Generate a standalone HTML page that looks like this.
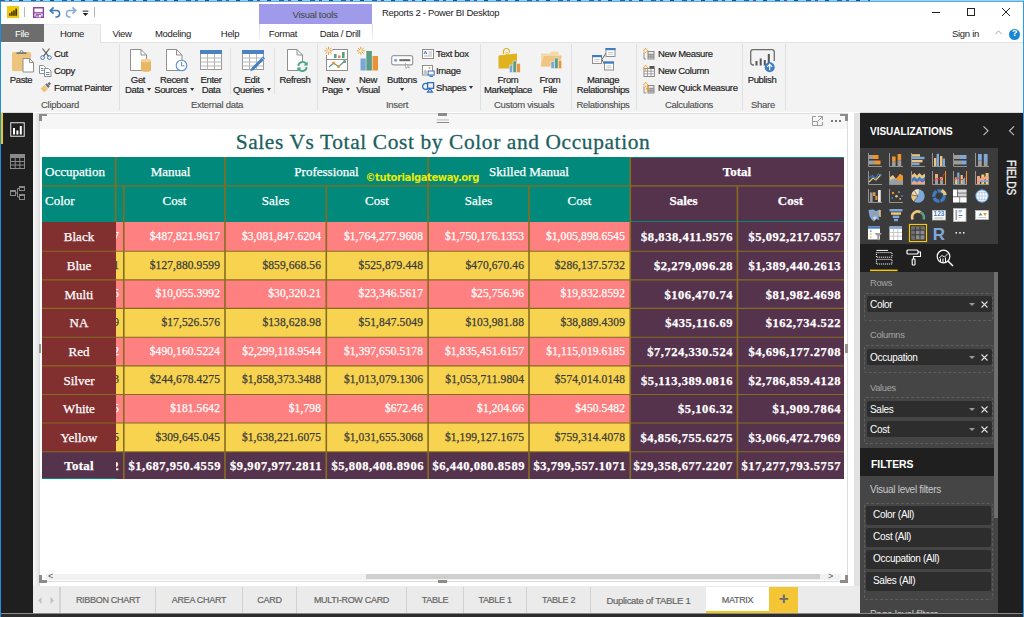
<!DOCTYPE html>
<html lang="en">
<head>
<meta charset="utf-8">
<title>Reports 2 - Power BI Desktop</title>
<style>
html,body{margin:0;padding:0}
body{width:1024px;height:617px;overflow:hidden;position:relative;background:#fff;font-family:"Liberation Sans",sans-serif;font-size:9.5px;letter-spacing:-0.3px;color:#1c1c1c;line-height:1}
.a{position:absolute}
.t{position:absolute;white-space:nowrap}
.c{position:absolute;white-space:nowrap;text-align:center;transform:translateX(-50%)}
svg{position:absolute;overflow:visible}
/* ribbon */
#ribbon{left:1px;top:43px;width:1022px;height:69px;background:#f3f3f3;border-bottom:1px solid #dadada}
.sep{position:absolute;top:44px;width:1px;height:66px;background:#e0e0e0}
.gl{top:100px;color:#4f4f4f;-webkit-text-stroke:0.12px}
.rb{color:#1f1f1f;line-height:10px;letter-spacing:-0.35px;-webkit-text-stroke:0.18px}
.car{display:inline-block;width:0;height:0;border-left:2.2px solid transparent;border-right:2.2px solid transparent;border-top:3px solid #333;vertical-align:1.8px;margin-left:1px}
/* matrix */
.cell{-webkit-text-stroke:0.25px;position:absolute;box-sizing:border-box;white-space:nowrap;overflow:hidden}
/* panes */
.well{position:absolute;left:867px;width:125px;height:18px;background:#2d2d2d;border-radius:2px;color:#fff;font-size:10px}
.well span{position:absolute;left:3px;top:4px}
.lbl{position:absolute;left:870px;color:#a6a6a6;font-size:10.5px}
.flt{position:absolute;left:866px;width:125px;height:20px;background:#2d2d2d;border-radius:2px;color:#fff;font-size:10px}
.flt span{position:absolute;left:7px;top:4px}
.ptab{position:absolute;top:587px;height:26px;box-sizing:border-box;border-right:1px solid #d0d0d0;color:#666;font-size:10.5px;text-align:center;line-height:27px;white-space:nowrap;-webkit-text-stroke:0.2px}
</style>
</head>
<body>
<!-- window frame -->
<div class="a" style="left:0;top:0;width:1024px;height:1px;background:#a9cde6"></div><div class="a" style="left:0;top:0;width:870px;height:1px;background:repeating-linear-gradient(90deg,#4a5878 0 5px,#9ccbe8 5px 9px,#7a4560 9px 12px,#a8d2ec 12px 19px,#39465f 19px 23px,#9ccbe8 23px 31px)"></div>
<div class="a" style="left:0;top:1px;width:1024px;height:1px;background:#4db0ef"></div>
<div class="a" style="left:0;top:1px;width:1px;height:616px;background:#1f8fe0"></div>
<div class="a" style="left:1023px;top:1px;width:1px;height:616px;background:#2b9ce8"></div>

<!-- TITLEBAR -->
<div id="titlebar">
<div class="a" style="left:7px;top:6px;width:12px;height:12px;background:#f2c811"></div>
<svg style="left:7px;top:6px" width="12" height="12" viewBox="0 0 12 12"><g fill="#2a2205"><rect x="2.2" y="7.2" width="1.3" height="2.6"/><rect x="4.2" y="5.6" width="1.4" height="4.2"/><rect x="6.3" y="4.4" width="1.4" height="5.4"/><rect x="8.4" y="2.6" width="1.5" height="7.2"/></g></svg>
<div class="a" style="left:24px;top:7px;width:1px;height:10px;background:#b5b5b5"></div>
<svg style="left:33px;top:7px" width="11" height="11" viewBox="0 0 11 11"><path d="M0.7 0.7h9.6v9.6h-9.6z" fill="#fff" stroke="#8c3fa8" stroke-width="1.4"/><rect x="0.7" y="5.2" width="9.6" height="1.3" fill="#8c3fa8"/><rect x="2.6" y="7.2" width="5.8" height="3.2" fill="#8c3fa8"/><rect x="3.4" y="8.6" width="1.2" height="1.8" fill="#fff"/><rect x="5.6" y="8" width="2.2" height="2.4" fill="#fff"/></svg>
<svg style="left:49px;top:6px" width="12" height="12" viewBox="0 0 12 12"><path d="M4.6 1.4 L1.2 4.6 L4.6 7.6 M1.4 4.6 H7.4 A3.2 3.2 0 0 1 7.4 11 H6.4" fill="none" stroke="#3a78b8" stroke-width="1.5"/></svg>
<svg style="left:65px;top:6px" width="12" height="12" viewBox="0 0 12 12"><path d="M7.4 1.4 L10.8 4.6 L7.4 7.6 M10.6 4.6 H4.6 A3.2 3.2 0 0 0 4.6 11 H5.6" fill="none" stroke="#86acd6" stroke-width="1.5"/></svg>
<svg style="left:82px;top:10px" width="7" height="7" viewBox="0 0 7 7"><rect x="0.6" y="0.6" width="5.8" height="1.1" fill="#333"/><path d="M0.6 3 H6.4 L3.5 6z" fill="#222"/></svg>
<div class="a" style="left:94px;top:7px;width:1px;height:10px;background:#b5b5b5"></div>
<div class="a" style="left:259px;top:4px;width:113px;height:20px;background:#9f9bea"></div>
<div class="c" style="left:315px;top:10px;color:#444">Visual tools</div>
<div class="t" style="left:382px;top:7.5px;color:#222">Reports 2 - Power BI Desktop</div>
<div class="a" style="left:932px;top:12px;width:8px;height:1px;background:#222"></div>
<div class="a" style="left:967px;top:8px;width:6px;height:6px;border:1px solid #222"></div>
<svg style="left:1002px;top:8px" width="8" height="8" viewBox="0 0 8 8"><path d="M0 0L8 8M8 0L0 8" stroke="#222" stroke-width="1"/></svg>
</div>
<!-- TABS -->
<div id="tabs">
<div class="a" style="left:1px;top:24px;width:43px;height:18px;background:#6d6d6d"></div>
<div class="c" style="left:22px;top:29px;color:#fff">File</div>
<div class="a" style="left:44px;top:24px;width:56px;height:19px;border-top:1px solid #ececec;box-sizing:content-box;background:#f3f3f3;border-right:1px solid #e2e2e2"></div>
<div class="a" style="left:101px;top:42px;width:922px;height:1px;background:#e2e2e2"></div>
<div class="c" style="left:72px;top:29px">Home</div>
<div class="c" style="left:122px;top:29px">View</div>
<div class="c" style="left:173px;top:29px">Modeling</div>
<div class="c" style="left:230px;top:29px">Help</div>
<div class="a" style="left:259px;top:24px;width:1px;height:16px;background:linear-gradient(#d6d4f5,#f4f4fb)"></div>
<div class="a" style="left:372px;top:24px;width:1px;height:16px;background:linear-gradient(#d6d4f5,#f4f4fb)"></div>
<div class="c" style="left:283px;top:29px">Format</div>
<div class="c" style="left:340px;top:29px">Data / Drill</div>
<div class="t" style="left:952px;top:28.5px">Sign in</div>
<svg style="left:995px;top:30px" width="7" height="5" viewBox="0 0 7 5"><path d="M0.3 4.2L3.5 0.8L6.7 4.2" fill="none" stroke="#aaa" stroke-width="1"/></svg>
<div class="a" style="left:1009px;top:29px;width:11px;height:11px;border-radius:6px;background:#1a86d2"></div>
<div class="c" style="left:1014.5px;top:28.5px;font-size:9px;font-weight:bold;color:#fff">?</div>
</div>
<!-- RIBBON -->
<div id="ribbon" class="a"></div>
<div id="rib">
<div class="sep" style="left:119px"></div>
<div class="sep" style="left:317px"></div>
<div class="sep" style="left:480px"></div>
<div class="sep" style="left:571px"></div>
<div class="sep" style="left:636px"></div>
<div class="sep" style="left:742px"></div>
<div class="sep" style="left:785px"></div>
<div class="sep" style="left:230px;height:46px;top:48px"></div>
<div class="sep" style="left:274px;height:46px;top:48px"></div>
<div class="c gl" style="left:60px">Clipboard</div>
<div class="c gl" style="left:217px">External data</div>
<div class="c gl" style="left:397px">Insert</div>
<div class="c gl" style="left:524px">Custom visuals</div>
<div class="c gl" style="left:603px">Relationships</div>
<div class="c gl" style="left:689px">Calculations</div>
<div class="c gl" style="left:763px">Share</div>
<div class="c rb" style="left:21px;top:75px">Paste</div>
<div class="t rb" style="left:54px;top:49px">Cut</div>
<div class="t rb" style="left:54px;top:66px">Copy</div>
<div class="t rb" style="left:54px;top:83px">Format Painter</div>
<div class="c rb" style="left:138px;top:75px">Get<br>Data <span class="car"></span></div>
<div class="c rb" style="left:174px;top:75px">Recent<br>Sources <span class="car"></span></div>
<div class="c rb" style="left:211px;top:75px">Enter<br>Data</div>
<div class="c rb" style="left:252px;top:75px">Edit<br>Queries <span class="car"></span></div>
<div class="c rb" style="left:295px;top:75px">Refresh</div>
<div class="c rb" style="left:336px;top:75px">New<br>Page <span class="car"></span></div>
<div class="c rb" style="left:368px;top:75px">New<br>Visual</div>
<div class="c rb" style="left:402px;top:75px">Buttons<br><span class="car" style="vertical-align:2.5px"></span></div>
<div class="t rb" style="left:436px;top:49px">Text box</div>
<div class="t rb" style="left:436px;top:66px">Image</div>
<div class="t rb" style="left:436px;top:83px">Shapes <span class="car"></span></div>
<div class="c rb" style="left:508px;top:75px">From<br>Marketplace</div>
<div class="c rb" style="left:550px;top:75px">From<br>File</div>
<div class="c rb" style="left:603px;top:75px">Manage<br>Relationships</div>
<div class="t rb" style="left:658px;top:49px">New Measure</div>
<div class="t rb" style="left:658px;top:66px">New Column</div>
<div class="t rb" style="left:658px;top:83px">New Quick Measure</div>
<div class="c rb" style="left:762px;top:75px">Publish</div>
<svg style="left:12px;top:49px" width="22" height="24" viewBox="0 0 22 24"><rect x="0" y="3" width="19" height="19" rx="1.5" fill="#ecc47c"/><path d="M4.5 5V3.2H7.5A2 2 0 0 1 11.5 3.2H14.5V5z" fill="#7b7b7b"/><circle cx="9.5" cy="2.6" r="0.8" fill="#f3f3f3"/><path d="M11 9.5H17.5L21.5 13.5V23H11z" fill="#fff" stroke="#8f8f8f" stroke-width="1"/><path d="M17.5 9.5V13.5H21.5" fill="none" stroke="#8f8f8f"/></svg>
<svg style="left:40px;top:48px" width="12" height="12" viewBox="0 0 12 12"><path d="M2.5 0.5L8.6 8.4M9.5 0.5L3.4 8.4" stroke="#555" stroke-width="1.1" fill="none"/><circle cx="2.6" cy="9.6" r="1.9" fill="none" stroke="#4a7ebb" stroke-width="1"/><circle cx="9.4" cy="9.6" r="1.9" fill="none" stroke="#4a7ebb" stroke-width="1"/></svg>
<svg style="left:39px;top:65px" width="13" height="12" viewBox="0 0 13 12"><path d="M0.5 0.5H4.5L6.5 2.5V8.5H0.5z" fill="#fff" stroke="#8f8f8f" stroke-width="1"/><path d="M2 3.5H4.5M2 5.5H4.5" stroke="#4a7ebb" stroke-width="0.9"/><path d="M5.5 3.5H9.5L12 6V11.5H5.5z" fill="#fff" stroke="#8f8f8f" stroke-width="1"/><path d="M7 7.5H10.5M7 9.5H10.5" stroke="#4a7ebb" stroke-width="0.9"/></svg>
<svg style="left:40px;top:82px" width="12" height="11" viewBox="0 0 12 11"><path d="M0.5 6.5L4.5 3L8 7L4 10.5z" fill="#ecc47c"/><path d="M5.2 2.6L6.8 1.2L9.8 4.6L8.2 6z" fill="#6b6b6b"/><path d="M7.6 1.6L9.4 0L11 1.8L9.2 3.4z" fill="#6b6b6b"/></svg>
<svg style="left:130px;top:49px" width="22" height="23" viewBox="0 0 22 23"><path d="M0.5 0.5H11L16.5 6V21.5H0.5z" fill="#fff" stroke="#8f8f8f" stroke-width="1"/><path d="M11 0.5V6H16.5" fill="none" stroke="#8f8f8f"/><path d="M11 11.5V21A5 1.8 0 0 0 21 21V11.5z" fill="#e8b766"/><ellipse cx="16" cy="11.5" rx="5" ry="1.8" fill="#f3d298"/></svg>
<svg style="left:166px;top:49px" width="22" height="23" viewBox="0 0 22 23"><path d="M0.5 0.5H10.5L16 6V21.5H0.5z" fill="#fff" stroke="#8f8f8f" stroke-width="1"/><path d="M10.5 0.5V6H16" fill="none" stroke="#8f8f8f"/><circle cx="15.5" cy="16.5" r="5.3" fill="#fff" stroke="#5a8ed0" stroke-width="1.1"/><path d="M15.5 13V16.8H18.5" fill="none" stroke="#5a8ed0" stroke-width="1"/></svg>
<svg style="left:200px;top:50px" width="22" height="20" viewBox="0 0 22 20"><rect x="0.5" y="0.5" width="21" height="19" fill="#fff" stroke="#9a9a9a"/><rect x="0" y="0" width="22" height="4" fill="#4a82c3"/><path d="M0.5 8H21.5M0.5 12H21.5M0.5 16H21.5M7.5 4V19.5M14.5 4V19.5" stroke="#b5b5b5" fill="none"/></svg>
<svg style="left:242px;top:50px" width="22" height="20" viewBox="0 0 22 20"><rect x="0.5" y="0.5" width="21" height="19" fill="#fff" stroke="#9a9a9a"/><rect x="0" y="0" width="22" height="4" fill="#4a82c3"/><path d="M0.5 8H21.5M0.5 12H21.5M0.5 16H21.5M7.5 4V19.5M14.5 4V19.5" stroke="#b5b5b5" fill="none"/></svg>
<svg style="left:248px;top:55px" width="18" height="18" viewBox="0 0 18 18"><path d="M15 1.5L17 3.5L5.5 15L2.2 16.3L3.5 13z" fill="#3f7cc4"/><path d="M13.8 2.7L15.8 4.7" stroke="#f3f3f3" stroke-width="0.8"/></svg>
<svg style="left:287px;top:49px" width="22" height="24" viewBox="0 0 22 24"><path d="M0.5 0.5H10L15.5 6V21.5H0.5z" fill="#fff" stroke="#8f8f8f" stroke-width="1"/><path d="M10 0.5V6H15.5" fill="none" stroke="#8f8f8f"/><circle cx="15.5" cy="17.5" r="5.6" fill="#f3f3f3"/><path d="M11.3 16.8A4.3 4.3 0 0 1 19 14.6" fill="none" stroke="#4aa380" stroke-width="1.8"/><path d="M20.6 12.4V16.4H16.6z" fill="#4aa380"/><path d="M19.7 18.2A4.3 4.3 0 0 1 12 20.4" fill="none" stroke="#4aa380" stroke-width="1.8"/><path d="M10.4 22.6V18.6H14.4z" fill="#4aa380"/></svg>
<svg style="left:324px;top:46px" width="25" height="26" viewBox="0 0 25 26"><rect x="2.5" y="3.5" width="21" height="21" fill="#fff" stroke="#8f8f8f"/><path d="M2.5 13.5H23.5" stroke="#8f8f8f"/><rect x="10" y="8" width="2.6" height="4" fill="#5a9e86"/><rect x="14" y="9.5" width="2.6" height="2.5" fill="#e8923a"/><rect x="18" y="6" width="2.6" height="6" fill="#5a9e86"/><path d="M5 21L9.5 17L14.5 20.5L20.5 15.5" fill="none" stroke="#5a9e86" stroke-width="1.3"/><circle cx="9.5" cy="17" r="1.5" fill="#e8923a"/><circle cx="14.5" cy="20.5" r="1.5" fill="#e8923a"/><circle cx="20.5" cy="15.5" r="1.6" fill="#5a9e86"/><rect x="0" y="0" width="8.5" height="9" fill="#f3f3f3"/><path d="M5.8 4.8L8.5 4.8M5.4 5.7L7.3 7.6M4.5 6.1L4.5 8.8M3.6 5.7L1.7 7.6M3.2 4.8L0.5 4.8M3.6 3.9L1.7 2.0M4.5 3.5L4.5 0.8M5.4 3.9L7.3 2.0" stroke="#f0a030" stroke-width="1" fill="none"/></svg>
<svg style="left:356px;top:46px" width="23" height="26" viewBox="0 0 23 26"><path d="M6.1 4.8L8.8 4.8M5.7 5.7L7.6 7.6M4.8 6.1L4.8 8.8M3.9 5.7L2.0 7.6M3.5 4.8L0.8 4.8M3.9 3.9L2.0 2.0M4.8 3.5L4.8 0.8M5.7 3.9L7.6 2.0" stroke="#f0a030" stroke-width="1" fill="none"/><rect x="4.5" y="12.5" width="5.3" height="12" fill="#7ba7d7"/><rect x="10.3" y="5" width="5.6" height="19.5" fill="#5a9e86"/><rect x="16.5" y="10" width="5.5" height="14.5" fill="#e8923a"/></svg>
<svg style="left:391px;top:55px" width="23" height="14" viewBox="0 0 23 14"><rect x="0.7" y="0.7" width="21" height="9.2" rx="2" fill="#fff" stroke="#9a9a9a" stroke-width="1.2"/><circle cx="4.6" cy="5.2" r="1.5" fill="#6aa0dc"/><rect x="8.3" y="4.2" width="11" height="2" fill="#666"/><path d="M14.5 8.5L15 13.5L16.5 12L18.3 13L16.5 10.5z" fill="#fff" stroke="#888" stroke-width="0.7"/></svg>
<svg style="left:422px;top:49px" width="12" height="10" viewBox="0 0 12 10"><rect x="0.5" y="0.5" width="11" height="9" fill="#fff" stroke="#8f8f8f"/><path d="M6.5 3H10M6.5 5H10M2 7H10" stroke="#aaa" stroke-width="0.9"/><path d="M2 5L3.4 2L4.8 5M2.5 4H4.3" stroke="#3f7cc4" stroke-width="0.9" fill="none"/></svg>
<svg style="left:422px;top:65px" width="13" height="12" viewBox="0 0 13 12"><rect x="0.5" y="0.5" width="10" height="9.5" fill="#fff" stroke="#8f8f8f"/><circle cx="7.5" cy="3" r="1" fill="#f0a030"/><path d="M1.5 9V6L3.5 4.5L5 6V9z" fill="#c5c5c5"/><rect x="6.2" y="6" width="6" height="4" fill="#fff" stroke="#3f7cc4" stroke-width="1.1"/><path d="M7.5 11.5H11" stroke="#3f7cc4" stroke-width="1"/></svg>
<svg style="left:422px;top:82px" width="13" height="11" viewBox="0 0 13 11"><circle cx="3.6" cy="4.4" r="3" fill="none" stroke="#2f6fb7" stroke-width="1.3"/><rect x="5.6" y="0.7" width="6" height="5.6" fill="#f3f3f3" stroke="#2f6fb7" stroke-width="1.3"/><path d="M8 6.5L5.5 10.2H10.5z" fill="#f3f3f3" stroke="#2f6fb7" stroke-width="1.2"/></svg>
<svg style="left:497px;top:47px" width="25" height="26" viewBox="0 0 25 26"><path d="M6.5 7V4.5A3 3 0 0 1 12.5 4.5V5.5" fill="none" stroke="#e0b21c" stroke-width="1.2"/><circle cx="10" cy="6.5" r="1.2" fill="none" stroke="#e0b21c" stroke-width="0.8"/><path d="M1.5 8.5L20 6.5V21.5H1.5z" fill="#e0b21c"/><rect x="12.4" y="18" width="3.4" height="7.5" fill="#7ba7d7" stroke="#f3f3f3" stroke-width="0.5"/><rect x="16" y="14" width="3.6" height="11.5" fill="#5a9e86" stroke="#f3f3f3" stroke-width="0.5"/><rect x="19.8" y="16.5" width="3.4" height="9" fill="#e8923a" stroke="#f3f3f3" stroke-width="0.5"/></svg>
<svg style="left:540px;top:50px" width="23" height="20" viewBox="0 0 23 20"><path d="M1 3.5H9.5L11.5 1.5H18.5V5H21.5L18 16.5H1z" fill="#f3d9ab"/><path d="M0.5 16.5L4 6H22L18.2 16.5z" fill="#f0c581"/><rect x="11" y="11.5" width="3.3" height="7" fill="#7ba7d7" stroke="#f3f3f3" stroke-width="0.5"/><rect x="14.6" y="8" width="3.5" height="10.5" fill="#5a9e86" stroke="#f3f3f3" stroke-width="0.5"/><rect x="18.4" y="10.5" width="3.3" height="8" fill="#e8923a" stroke="#f3f3f3" stroke-width="0.5"/></svg>
<svg style="left:592px;top:48px" width="24" height="23" viewBox="0 0 24 23"><path d="M10 11.5L14 5M10 11.5L13 17.5" stroke="#666" stroke-width="1" fill="none"/><rect x="0.5" y="7.5" width="9" height="8" fill="#fff" stroke="#8f8f8f"/><rect x="0" y="7" width="10" height="2.2" fill="#3f7cc4"/><path d="M2.5 11.5H7.5M2.5 13.3H7.5" stroke="#bbb" stroke-width="0.8"/><rect x="14.0" y="0.5" width="9" height="8" fill="#fff" stroke="#8f8f8f"/><rect x="13.5" y="0" width="10" height="2.2" fill="#3f7cc4"/><path d="M16.0 4.5H21.0M16.0 6.3H21.0" stroke="#bbb" stroke-width="0.8"/><rect x="12.5" y="14.0" width="9" height="8" fill="#fff" stroke="#8f8f8f"/><rect x="12" y="13.5" width="10" height="2.2" fill="#3f7cc4"/><path d="M14.5 18.0H19.5M14.5 19.8H19.5" stroke="#bbb" stroke-width="0.8"/></svg>
<svg style="left:643px;top:48px" width="13" height="12" viewBox="0 0 13 12"><path d="M1 4.5V11H3" fill="none" stroke="#8f8f8f"/><rect x="4.5" y="3" width="7" height="8.5" fill="#8a8a8a"/><rect x="5.6" y="4" width="4.8" height="1.8" fill="#eee"/><path d="M5.6 7.3H10.4M5.6 9H10.4M5.6 10.4H10.4" stroke="#ddd" stroke-width="0.8" stroke-dasharray="1.2 0.6"/><path d="M3.9 2.6L5.2 2.6M3.5 3.5L4.4 4.4M2.6 3.9L2.6 5.2M1.7 3.5L0.8 4.4M1.3 2.6L0.0 2.6M1.7 1.7L0.8 0.8M2.6 1.3L2.6 0.0M3.5 1.7L4.4 0.8" stroke="#f0a030" stroke-width="1" fill="none"/></svg>
<svg style="left:643px;top:65px" width="13" height="12" viewBox="0 0 13 12"><rect x="1" y="3.5" width="10.5" height="8" fill="#fff" stroke="#8f8f8f"/><rect x="6.5" y="1" width="5" height="2.8" fill="#555"/><path d="M1 6.2H11.5M1 8.8H11.5M4.5 3.5V11.5M8 3.5V11.5" stroke="#999" stroke-width="0.9"/><path d="M3.9 2.6L5.2 2.6M3.5 3.5L4.4 4.4M2.6 3.9L2.6 5.2M1.7 3.5L0.8 4.4M1.3 2.6L0.0 2.6M1.7 1.7L0.8 0.8M2.6 1.3L2.6 0.0M3.5 1.7L4.4 0.8" stroke="#f0a030" stroke-width="1" fill="none"/></svg>
<svg style="left:643px;top:82px" width="13" height="12" viewBox="0 0 13 12"><path d="M1 4.5V11H3" fill="none" stroke="#8f8f8f"/><rect x="4.5" y="3" width="7" height="8.5" fill="#8a8a8a"/><rect x="5.6" y="4" width="4.8" height="1.8" fill="#eee"/><path d="M5.6 7.3H10.4M5.6 9H10.4M5.6 10.4H10.4" stroke="#ddd" stroke-width="0.8" stroke-dasharray="1.2 0.6"/><path d="M5 3L2.5 7.5H4.5L3 11.5L7 6H4.8z" fill="#f0a030"/><path d="M3.9 2.6L5.2 2.6M3.5 3.5L4.4 4.4M2.6 3.9L2.6 5.2M1.7 3.5L0.8 4.4M1.3 2.6L0.0 2.6M1.7 1.7L0.8 0.8M2.6 1.3L2.6 0.0M3.5 1.7L4.4 0.8" stroke="#f0a030" stroke-width="1" fill="none"/></svg>
<svg style="left:750px;top:49px" width="26" height="24" viewBox="0 0 26 24"><path d="M4 16H3A2.4 2.4 0 0 1 0.7 13.6V3A2.4 2.4 0 0 1 3 0.7H22A2.4 2.4 0 0 1 24.3 3V12" fill="none" stroke="#6d6d6d" stroke-width="1.3"/><rect x="5.5" y="12" width="2" height="4.5" fill="#555"/><rect x="9.7" y="9.5" width="2" height="7" fill="#555"/><rect x="13.8" y="11" width="2" height="5.5" fill="#555"/><rect x="17.8" y="5" width="2" height="9" fill="#555"/><circle cx="19.7" cy="18.2" r="5" fill="#3f7cc4"/><path d="M19.7 21.3V15.6M17.2 17.9L19.7 15.4L22.2 17.9" fill="none" stroke="#fff" stroke-width="1.2"/></svg>
</div>
<!-- WORKSPACE -->
<div id="work">
<div class="a" style="left:1px;top:113px;width:32px;height:500px;background:#1f1f1f"></div>
<div class="a" style="left:1px;top:113px;width:2px;height:31px;background:#f2c811"></div>
<svg style="left:10px;top:122px" width="15" height="15" viewBox="0 0 15 15"><rect x="0.75" y="0.75" width="13.5" height="13.5" fill="none" stroke="#e8e8e8" stroke-width="1"/><rect x="3" y="6" width="2" height="6.5" fill="#fff"/><rect x="6.4" y="8.5" width="2" height="4" fill="#fff"/><rect x="9.8" y="4" width="2" height="8.5" fill="#fff"/></svg>
<svg style="left:10px;top:154px" width="15" height="15" viewBox="0 0 15 15"><rect x="0.5" y="0.5" width="14" height="14" fill="none" stroke="#8a8a8a"/><rect x="0.5" y="0.5" width="14" height="3.5" fill="#8a8a8a"/><path d="M0.5 7.5H14.5M0.5 11H14.5M5.2 4V14.5M9.8 4V14.5" stroke="#8a8a8a" fill="none"/></svg>
<svg style="left:10px;top:186px" width="15" height="15" viewBox="0 0 15 15"><g fill="none" stroke="#8a8a8a"><rect x="0.5" y="4.5" width="5" height="5"/><rect x="9.5" y="0.5" width="5" height="4"/><rect x="9.5" y="8.5" width="5" height="5"/><path d="M5.5 7H7.5V2.5H9.5M7.5 7V11H9.5"/></g><rect x="9.5" y="0.5" width="5" height="1.5" fill="#8a8a8a"/><rect x="9.5" y="8.5" width="5" height="1.5" fill="#8a8a8a"/><rect x="0.5" y="4.5" width="5" height="1.5" fill="#8a8a8a"/></svg>
<div class="a" style="left:33px;top:112px;width:827px;height:475px;background:#fff"></div><div class="a" style="left:33px;top:113px;width:7px;height:473px;background:linear-gradient(90deg,#f7f7f7,#dddddd)"></div><div class="a" style="left:854px;top:113px;width:6px;height:473px;background:#e2e2e2"></div>
<div class="a" style="left:39px;top:113px;width:809px;height:469px;background:#fff;border:1px solid #dcdcdc;box-sizing:border-box"></div>
<div class="a" style="left:40px;top:114px;width:807px;height:15px;background:#f6f6f6"></div>
<div class="a" style="left:46px;top:573.5px;width:795px;height:6px;background:#f1f1f1"></div>
<div class="a" style="left:366px;top:573.5px;width:454px;height:5.3px;background:#cdd0cd"></div>
<div class="t" style="left:48px;top:572px;font-size:9px;color:#555">&lt;</div>
<div class="t" style="left:828px;top:572px;font-size:9px;color:#555">&gt;</div>
<div class="a" style="left:39px;top:113.5px;width:7.5px;height:2.5px;background:#8f8b88"></div><div class="a" style="left:39px;top:113.5px;width:2.5px;height:7.5px;background:#8f8b88"></div>
<div class="a" style="left:840.3px;top:113.5px;width:7.5px;height:2.5px;background:#8f8b88"></div><div class="a" style="left:845.3px;top:113.5px;width:2.5px;height:7.5px;background:#8f8b88"></div>
<div class="a" style="left:39px;top:580.2px;width:7.5px;height:2.5px;background:#8f8b88"></div><div class="a" style="left:39px;top:575.2px;width:2.5px;height:7.5px;background:#8f8b88"></div>
<div class="a" style="left:840.3px;top:580.2px;width:7.5px;height:2.5px;background:#8f8b88"></div><div class="a" style="left:845.3px;top:575.2px;width:2.5px;height:7.5px;background:#8f8b88"></div>
<div class="a" style="left:438px;top:113.2px;width:9px;height:3.3px;background:#8f8b88"></div><svg style="left:0;top:0" width="1024" height="617" viewBox="0 0 1024 617"><path d="M436.7 119.9H449" stroke="#c8c8c8" stroke-width="1.3"/><path d="M436.7 122.5H449" stroke="#8a8a8a" stroke-width="1"/></svg>
<div class="a" style="left:438px;top:579.8px;width:9px;height:2.8px;background:#8f8b88"></div>
<div class="a" style="left:39px;top:343.7px;width:2px;height:9px;background:#9a9590"></div>
<div class="a" style="left:845px;top:343.7px;width:3px;height:9px;background:#9a9590"></div>
<svg style="left:812px;top:116px" width="11" height="10" viewBox="0 0 11 10"><path d="M4 0.5H0.5V9.5H10.5V6M6 0.5H10.5V4M10.5 0.5L5.5 5.5M0.5 5.5H5.5V9.5" fill="none" stroke="#999" stroke-width="1"/></svg>
<div class="a" style="left:831px;top:120px;width:2px;height:2px;background:#777"></div><div class="a" style="left:835px;top:120px;width:2px;height:2px;background:#777"></div><div class="a" style="left:839px;top:120px;width:2px;height:2px;background:#777"></div>
<div class="c" style="left:443px;top:129px;font-family:'Liberation Serif',serif;font-size:21.4px;letter-spacing:0.62px;color:#1c5f60;line-height:26px;-webkit-text-stroke:0.3px">Sales Vs Total Cost by Color and Occupation</div>
<div id="mx" style="font-family:'Liberation Serif',serif">
<div class="cell" style="left:42px;top:157px;width:74px;height:29px;background:#018a7c;color:#fff;font-size:13px;letter-spacing:0;line-height:30px;text-align:left;padding-left:3px;">Occupation</div>
<div class="cell" style="left:116px;top:157px;width:109px;height:29px;background:#018a7c;color:#fff;font-size:13px;letter-spacing:0;line-height:30px;text-align:center;">Manual</div>
<div class="cell" style="left:225px;top:157px;width:203px;height:29px;background:#018a7c;color:#fff;font-size:13px;letter-spacing:0;line-height:30px;text-align:center;">Professional</div>
<div class="cell" style="left:428px;top:157px;width:202px;height:29px;background:#018a7c;color:#fff;font-size:13px;letter-spacing:0;line-height:30px;text-align:center;">Skilled Manual</div>
<div class="cell" style="left:630px;top:157px;width:214px;height:29px;background:#56334d;color:#fff;font-size:13px;letter-spacing:0;line-height:27px;font-weight:bold;text-align:center;border-top:1px solid #018a7c;">Total</div>
<div class="cell" style="left:42px;top:186px;width:74px;height:36px;background:#018a7c;color:#fff;font-size:13px;letter-spacing:0;line-height:30px;text-align:left;padding-left:3px;">Color</div>
<div class="cell" style="left:116px;top:186px;width:8px;height:36px;background:#018a7c;"></div>
<div class="cell" style="left:124px;top:186px;width:101px;height:36px;background:#018a7c;color:#fff;font-size:13px;letter-spacing:0;line-height:30px;text-align:center;">Cost</div>
<div class="cell" style="left:225px;top:186px;width:101px;height:36px;background:#018a7c;color:#fff;font-size:13px;letter-spacing:0;line-height:30px;text-align:center;">Sales</div>
<div class="cell" style="left:326px;top:186px;width:102px;height:36px;background:#018a7c;color:#fff;font-size:13px;letter-spacing:0;line-height:30px;text-align:center;">Cost</div>
<div class="cell" style="left:428px;top:186px;width:101px;height:36px;background:#018a7c;color:#fff;font-size:13px;letter-spacing:0;line-height:30px;text-align:center;">Sales</div>
<div class="cell" style="left:529px;top:186px;width:101px;height:36px;background:#018a7c;color:#fff;font-size:13px;letter-spacing:0;line-height:30px;text-align:center;">Cost</div>
<div class="cell" style="left:630px;top:186px;width:107px;height:36px;background:#56334d;color:#fff;font-size:13px;letter-spacing:0;line-height:29px;font-weight:bold;text-align:center;border-bottom:1px solid #018a7c;">Sales</div>
<div class="cell" style="left:737px;top:186px;width:107px;height:36px;background:#56334d;color:#fff;font-size:13px;letter-spacing:0;line-height:29px;font-weight:bold;text-align:center;border-bottom:1px solid #018a7c;">Cost</div>
<div class="cell" style="left:42px;top:222px;width:74px;height:29px;background:#822f30;color:#fff;font-size:13px;letter-spacing:0;text-align:center;line-height:30px;">Black</div>
<div class="cell" style="left:116px;top:222px;width:8px;height:29px;background:#ff8080;color:#fff;text-align:right;padding-right:5px;font-size:11.5px;letter-spacing:0.1px;line-height:29px;padding-right:5px;direction:rtl;">7</div>
<div class="cell" style="left:124px;top:222px;width:101px;height:29px;background:#ff8080;color:#fff;text-align:right;padding-right:5px;font-size:11.5px;letter-spacing:0.1px;line-height:29px;">$487,821.9617</div>
<div class="cell" style="left:225px;top:222px;width:101px;height:29px;background:#ff8080;color:#fff;text-align:right;padding-right:5px;font-size:11.5px;letter-spacing:0.1px;line-height:29px;">$3,081,847.6204</div>
<div class="cell" style="left:326px;top:222px;width:102px;height:29px;background:#ff8080;color:#fff;text-align:right;padding-right:5px;font-size:11.5px;letter-spacing:0.1px;line-height:29px;">$1,764,277.9608</div>
<div class="cell" style="left:428px;top:222px;width:101px;height:29px;background:#ff8080;color:#fff;text-align:right;padding-right:5px;font-size:11.5px;letter-spacing:0.1px;line-height:29px;">$1,750,176.1353</div>
<div class="cell" style="left:529px;top:222px;width:101px;height:29px;background:#ff8080;color:#fff;text-align:right;padding-right:5px;font-size:11.5px;letter-spacing:0.1px;line-height:29px;">$1,005,898.6545</div>
<div class="cell" style="left:630px;top:222px;width:107px;height:29px;background:#56334d;color:#fff;text-align:right;padding-right:4px;font-size:12.5px;font-weight:bold;letter-spacing:0.55px;line-height:31px;">$8,838,411.9576</div>
<div class="cell" style="left:737px;top:222px;width:107px;height:29px;background:#56334d;color:#fff;text-align:right;padding-right:3px;font-size:12.5px;font-weight:bold;letter-spacing:0.55px;line-height:31px;">$5,092,217.0557</div>
<div class="cell" style="left:42px;top:251px;width:74px;height:29px;background:#822f30;color:#fff;font-size:13px;letter-spacing:0;text-align:center;line-height:30px;">Blue</div>
<div class="cell" style="left:116px;top:251px;width:8px;height:29px;background:#f7d34f;color:#3a3a3a;text-align:right;padding-right:5px;font-size:11.5px;letter-spacing:0.1px;line-height:29px;padding-right:5px;direction:rtl;">1</div>
<div class="cell" style="left:124px;top:251px;width:101px;height:29px;background:#f7d34f;color:#3a3a3a;text-align:right;padding-right:5px;font-size:11.5px;letter-spacing:0.1px;line-height:29px;">$127,880.9599</div>
<div class="cell" style="left:225px;top:251px;width:101px;height:29px;background:#f7d34f;color:#3a3a3a;text-align:right;padding-right:5px;font-size:11.5px;letter-spacing:0.1px;line-height:29px;">$859,668.56</div>
<div class="cell" style="left:326px;top:251px;width:102px;height:29px;background:#f7d34f;color:#3a3a3a;text-align:right;padding-right:5px;font-size:11.5px;letter-spacing:0.1px;line-height:29px;">$525,879.448</div>
<div class="cell" style="left:428px;top:251px;width:101px;height:29px;background:#f7d34f;color:#3a3a3a;text-align:right;padding-right:5px;font-size:11.5px;letter-spacing:0.1px;line-height:29px;">$470,670.46</div>
<div class="cell" style="left:529px;top:251px;width:101px;height:29px;background:#f7d34f;color:#3a3a3a;text-align:right;padding-right:5px;font-size:11.5px;letter-spacing:0.1px;line-height:29px;">$286,137.5732</div>
<div class="cell" style="left:630px;top:251px;width:107px;height:29px;background:#56334d;color:#fff;text-align:right;padding-right:4px;font-size:12.5px;font-weight:bold;letter-spacing:0.55px;line-height:31px;">$2,279,096.28</div>
<div class="cell" style="left:737px;top:251px;width:107px;height:29px;background:#56334d;color:#fff;text-align:right;padding-right:3px;font-size:12.5px;font-weight:bold;letter-spacing:0.55px;line-height:31px;">$1,389,440.2613</div>
<div class="cell" style="left:42px;top:280px;width:74px;height:28px;background:#822f30;color:#fff;font-size:13px;letter-spacing:0;text-align:center;line-height:29px;">Multi</div>
<div class="cell" style="left:116px;top:280px;width:8px;height:28px;background:#ff8080;color:#fff;text-align:right;padding-right:5px;font-size:11.5px;letter-spacing:0.1px;line-height:27px;padding-right:5px;direction:rtl;">5</div>
<div class="cell" style="left:124px;top:280px;width:101px;height:28px;background:#ff8080;color:#fff;text-align:right;padding-right:5px;font-size:11.5px;letter-spacing:0.1px;line-height:27px;">$10,055.3992</div>
<div class="cell" style="left:225px;top:280px;width:101px;height:28px;background:#ff8080;color:#fff;text-align:right;padding-right:5px;font-size:11.5px;letter-spacing:0.1px;line-height:27px;">$30,320.21</div>
<div class="cell" style="left:326px;top:280px;width:102px;height:28px;background:#ff8080;color:#fff;text-align:right;padding-right:5px;font-size:11.5px;letter-spacing:0.1px;line-height:27px;">$23,346.5617</div>
<div class="cell" style="left:428px;top:280px;width:101px;height:28px;background:#ff8080;color:#fff;text-align:right;padding-right:5px;font-size:11.5px;letter-spacing:0.1px;line-height:27px;">$25,756.96</div>
<div class="cell" style="left:529px;top:280px;width:101px;height:28px;background:#ff8080;color:#fff;text-align:right;padding-right:5px;font-size:11.5px;letter-spacing:0.1px;line-height:27px;">$19,832.8592</div>
<div class="cell" style="left:630px;top:280px;width:107px;height:28px;background:#56334d;color:#fff;text-align:right;padding-right:4px;font-size:12.5px;font-weight:bold;letter-spacing:0.55px;line-height:30px;">$106,470.74</div>
<div class="cell" style="left:737px;top:280px;width:107px;height:28px;background:#56334d;color:#fff;text-align:right;padding-right:3px;font-size:12.5px;font-weight:bold;letter-spacing:0.55px;line-height:30px;">$81,982.4698</div>
<div class="cell" style="left:42px;top:308px;width:74px;height:29px;background:#822f30;color:#fff;font-size:13px;letter-spacing:0;text-align:center;line-height:30px;">NA</div>
<div class="cell" style="left:116px;top:308px;width:8px;height:29px;background:#f7d34f;color:#3a3a3a;text-align:right;padding-right:5px;font-size:11.5px;letter-spacing:0.1px;line-height:29px;padding-right:5px;direction:rtl;">9</div>
<div class="cell" style="left:124px;top:308px;width:101px;height:29px;background:#f7d34f;color:#3a3a3a;text-align:right;padding-right:5px;font-size:11.5px;letter-spacing:0.1px;line-height:29px;">$17,526.576</div>
<div class="cell" style="left:225px;top:308px;width:101px;height:29px;background:#f7d34f;color:#3a3a3a;text-align:right;padding-right:5px;font-size:11.5px;letter-spacing:0.1px;line-height:29px;">$138,628.98</div>
<div class="cell" style="left:326px;top:308px;width:102px;height:29px;background:#f7d34f;color:#3a3a3a;text-align:right;padding-right:5px;font-size:11.5px;letter-spacing:0.1px;line-height:29px;">$51,847.5049</div>
<div class="cell" style="left:428px;top:308px;width:101px;height:29px;background:#f7d34f;color:#3a3a3a;text-align:right;padding-right:5px;font-size:11.5px;letter-spacing:0.1px;line-height:29px;">$103,981.88</div>
<div class="cell" style="left:529px;top:308px;width:101px;height:29px;background:#f7d34f;color:#3a3a3a;text-align:right;padding-right:5px;font-size:11.5px;letter-spacing:0.1px;line-height:29px;">$38,889.4309</div>
<div class="cell" style="left:630px;top:308px;width:107px;height:29px;background:#56334d;color:#fff;text-align:right;padding-right:4px;font-size:12.5px;font-weight:bold;letter-spacing:0.55px;line-height:31px;">$435,116.69</div>
<div class="cell" style="left:737px;top:308px;width:107px;height:29px;background:#56334d;color:#fff;text-align:right;padding-right:3px;font-size:12.5px;font-weight:bold;letter-spacing:0.55px;line-height:31px;">$162,734.522</div>
<div class="cell" style="left:42px;top:337px;width:74px;height:29px;background:#822f30;color:#fff;font-size:13px;letter-spacing:0;text-align:center;line-height:30px;">Red</div>
<div class="cell" style="left:116px;top:337px;width:8px;height:29px;background:#ff8080;color:#fff;text-align:right;padding-right:5px;font-size:11.5px;letter-spacing:0.1px;line-height:29px;padding-right:5px;direction:rtl;">2</div>
<div class="cell" style="left:124px;top:337px;width:101px;height:29px;background:#ff8080;color:#fff;text-align:right;padding-right:5px;font-size:11.5px;letter-spacing:0.1px;line-height:29px;">$490,160.5224</div>
<div class="cell" style="left:225px;top:337px;width:101px;height:29px;background:#ff8080;color:#fff;text-align:right;padding-right:5px;font-size:11.5px;letter-spacing:0.1px;line-height:29px;">$2,299,118.9544</div>
<div class="cell" style="left:326px;top:337px;width:102px;height:29px;background:#ff8080;color:#fff;text-align:right;padding-right:5px;font-size:11.5px;letter-spacing:0.1px;line-height:29px;">$1,397,650.5178</div>
<div class="cell" style="left:428px;top:337px;width:101px;height:29px;background:#ff8080;color:#fff;text-align:right;padding-right:5px;font-size:11.5px;letter-spacing:0.1px;line-height:29px;">$1,835,451.6157</div>
<div class="cell" style="left:529px;top:337px;width:101px;height:29px;background:#ff8080;color:#fff;text-align:right;padding-right:5px;font-size:11.5px;letter-spacing:0.1px;line-height:29px;">$1,115,019.6185</div>
<div class="cell" style="left:630px;top:337px;width:107px;height:29px;background:#56334d;color:#fff;text-align:right;padding-right:4px;font-size:12.5px;font-weight:bold;letter-spacing:0.55px;line-height:31px;">$7,724,330.524</div>
<div class="cell" style="left:737px;top:337px;width:107px;height:29px;background:#56334d;color:#fff;text-align:right;padding-right:3px;font-size:12.5px;font-weight:bold;letter-spacing:0.55px;line-height:31px;">$4,696,177.2708</div>
<div class="cell" style="left:42px;top:366px;width:74px;height:28px;background:#822f30;color:#fff;font-size:13px;letter-spacing:0;text-align:center;line-height:29px;">Silver</div>
<div class="cell" style="left:116px;top:366px;width:8px;height:28px;background:#f7d34f;color:#3a3a3a;text-align:right;padding-right:5px;font-size:11.5px;letter-spacing:0.1px;line-height:27px;padding-right:5px;direction:rtl;">3</div>
<div class="cell" style="left:124px;top:366px;width:101px;height:28px;background:#f7d34f;color:#3a3a3a;text-align:right;padding-right:5px;font-size:11.5px;letter-spacing:0.1px;line-height:27px;">$244,678.4275</div>
<div class="cell" style="left:225px;top:366px;width:101px;height:28px;background:#f7d34f;color:#3a3a3a;text-align:right;padding-right:5px;font-size:11.5px;letter-spacing:0.1px;line-height:27px;">$1,858,373.3488</div>
<div class="cell" style="left:326px;top:366px;width:102px;height:28px;background:#f7d34f;color:#3a3a3a;text-align:right;padding-right:5px;font-size:11.5px;letter-spacing:0.1px;line-height:27px;">$1,013,079.1306</div>
<div class="cell" style="left:428px;top:366px;width:101px;height:28px;background:#f7d34f;color:#3a3a3a;text-align:right;padding-right:5px;font-size:11.5px;letter-spacing:0.1px;line-height:27px;">$1,053,711.9804</div>
<div class="cell" style="left:529px;top:366px;width:101px;height:28px;background:#f7d34f;color:#3a3a3a;text-align:right;padding-right:5px;font-size:11.5px;letter-spacing:0.1px;line-height:27px;">$574,014.0148</div>
<div class="cell" style="left:630px;top:366px;width:107px;height:28px;background:#56334d;color:#fff;text-align:right;padding-right:4px;font-size:12.5px;font-weight:bold;letter-spacing:0.55px;line-height:30px;">$5,113,389.0816</div>
<div class="cell" style="left:737px;top:366px;width:107px;height:28px;background:#56334d;color:#fff;text-align:right;padding-right:3px;font-size:12.5px;font-weight:bold;letter-spacing:0.55px;line-height:30px;">$2,786,859.4128</div>
<div class="cell" style="left:42px;top:394px;width:74px;height:29px;background:#822f30;color:#fff;font-size:13px;letter-spacing:0;text-align:center;line-height:30px;">White</div>
<div class="cell" style="left:116px;top:394px;width:8px;height:29px;background:#ff8080;color:#fff;text-align:right;padding-right:5px;font-size:11.5px;letter-spacing:0.1px;line-height:29px;padding-right:5px;direction:rtl;">5</div>
<div class="cell" style="left:124px;top:394px;width:101px;height:29px;background:#ff8080;color:#fff;text-align:right;padding-right:5px;font-size:11.5px;letter-spacing:0.1px;line-height:29px;">$181.5642</div>
<div class="cell" style="left:225px;top:394px;width:101px;height:29px;background:#ff8080;color:#fff;text-align:right;padding-right:5px;font-size:11.5px;letter-spacing:0.1px;line-height:29px;">$1,798</div>
<div class="cell" style="left:326px;top:394px;width:102px;height:29px;background:#ff8080;color:#fff;text-align:right;padding-right:5px;font-size:11.5px;letter-spacing:0.1px;line-height:29px;">$672.46</div>
<div class="cell" style="left:428px;top:394px;width:101px;height:29px;background:#ff8080;color:#fff;text-align:right;padding-right:5px;font-size:11.5px;letter-spacing:0.1px;line-height:29px;">$1,204.66</div>
<div class="cell" style="left:529px;top:394px;width:101px;height:29px;background:#ff8080;color:#fff;text-align:right;padding-right:5px;font-size:11.5px;letter-spacing:0.1px;line-height:29px;">$450.5482</div>
<div class="cell" style="left:630px;top:394px;width:107px;height:29px;background:#56334d;color:#fff;text-align:right;padding-right:4px;font-size:12.5px;font-weight:bold;letter-spacing:0.55px;line-height:31px;">$5,106.32</div>
<div class="cell" style="left:737px;top:394px;width:107px;height:29px;background:#56334d;color:#fff;text-align:right;padding-right:3px;font-size:12.5px;font-weight:bold;letter-spacing:0.55px;line-height:31px;">$1,909.7864</div>
<div class="cell" style="left:42px;top:423px;width:74px;height:29px;background:#822f30;color:#fff;font-size:13px;letter-spacing:0;text-align:center;line-height:30px;">Yellow</div>
<div class="cell" style="left:116px;top:423px;width:8px;height:29px;background:#f7d34f;color:#3a3a3a;text-align:right;padding-right:5px;font-size:11.5px;letter-spacing:0.1px;line-height:29px;padding-right:5px;direction:rtl;">5</div>
<div class="cell" style="left:124px;top:423px;width:101px;height:29px;background:#f7d34f;color:#3a3a3a;text-align:right;padding-right:5px;font-size:11.5px;letter-spacing:0.1px;line-height:29px;">$309,645.045</div>
<div class="cell" style="left:225px;top:423px;width:101px;height:29px;background:#f7d34f;color:#3a3a3a;text-align:right;padding-right:5px;font-size:11.5px;letter-spacing:0.1px;line-height:29px;">$1,638,221.6075</div>
<div class="cell" style="left:326px;top:423px;width:102px;height:29px;background:#f7d34f;color:#3a3a3a;text-align:right;padding-right:5px;font-size:11.5px;letter-spacing:0.1px;line-height:29px;">$1,031,655.3068</div>
<div class="cell" style="left:428px;top:423px;width:101px;height:29px;background:#f7d34f;color:#3a3a3a;text-align:right;padding-right:5px;font-size:11.5px;letter-spacing:0.1px;line-height:29px;">$1,199,127.1675</div>
<div class="cell" style="left:529px;top:423px;width:101px;height:29px;background:#f7d34f;color:#3a3a3a;text-align:right;padding-right:5px;font-size:11.5px;letter-spacing:0.1px;line-height:29px;">$759,314.4078</div>
<div class="cell" style="left:630px;top:423px;width:107px;height:29px;background:#56334d;color:#fff;text-align:right;padding-right:4px;font-size:12.5px;font-weight:bold;letter-spacing:0.55px;line-height:31px;">$4,856,755.6275</div>
<div class="cell" style="left:737px;top:423px;width:107px;height:29px;background:#56334d;color:#fff;text-align:right;padding-right:3px;font-size:12.5px;font-weight:bold;letter-spacing:0.55px;line-height:31px;">$3,066,472.7969</div>
<div class="cell" style="left:42px;top:452px;width:74px;height:27px;background:#56334d;color:#fff;font-size:13px;font-weight:bold;letter-spacing:0.2px;text-align:center;line-height:28px;border-bottom:1px solid #018a7c;">Total</div>
<div class="cell" style="left:116px;top:452px;width:8px;height:27px;background:#56334d;color:#fff;text-align:right;padding-right:5px;font-size:12.5px;font-weight:bold;letter-spacing:0.55px;line-height:29px;padding-right:4px;padding-right:5px;direction:rtl;">2</div>
<div class="cell" style="left:124px;top:452px;width:101px;height:27px;background:#56334d;color:#fff;text-align:right;padding-right:5px;font-size:12.5px;font-weight:bold;letter-spacing:0.55px;line-height:29px;padding-right:4px;">$1,687,950.4559</div>
<div class="cell" style="left:225px;top:452px;width:101px;height:27px;background:#56334d;color:#fff;text-align:right;padding-right:5px;font-size:12.5px;font-weight:bold;letter-spacing:0.55px;line-height:29px;padding-right:4px;">$9,907,977.2811</div>
<div class="cell" style="left:326px;top:452px;width:102px;height:27px;background:#56334d;color:#fff;text-align:right;padding-right:5px;font-size:12.5px;font-weight:bold;letter-spacing:0.55px;line-height:29px;padding-right:4px;">$5,808,408.8906</div>
<div class="cell" style="left:428px;top:452px;width:101px;height:27px;background:#56334d;color:#fff;text-align:right;padding-right:5px;font-size:12.5px;font-weight:bold;letter-spacing:0.55px;line-height:29px;padding-right:4px;">$6,440,080.8589</div>
<div class="cell" style="left:529px;top:452px;width:101px;height:27px;background:#56334d;color:#fff;text-align:right;padding-right:5px;font-size:12.5px;font-weight:bold;letter-spacing:0.55px;line-height:29px;padding-right:4px;">$3,799,557.1071</div>
<div class="cell" style="left:630px;top:452px;width:107px;height:27px;background:#56334d;color:#fff;text-align:right;padding-right:4px;font-size:12.5px;font-weight:bold;letter-spacing:0.55px;line-height:29px;">$29,358,677.2207</div>
<div class="cell" style="left:737px;top:452px;width:107px;height:27px;background:#56334d;color:#fff;text-align:right;padding-right:3px;font-size:12.5px;font-weight:bold;letter-spacing:0.55px;line-height:29px;">$17,277,793.5757</div>
<svg style="left:0;top:0" width="1024" height="617" viewBox="0 0 1024 617" fill="none"><path d="M115.7 157V221.6" stroke="#866c20" stroke-width="1.6"/><path d="M123.8 186V479" stroke="#866c20" stroke-width="1.6"/><path d="M225 157V479" stroke="#866c20" stroke-width="1.6"/><path d="M428.1 157V479" stroke="#866c20" stroke-width="1.6"/><path d="M630.3 157V479" stroke="#866c20" stroke-width="1.6"/><path d="M326.3 186V479" stroke="#866c20" stroke-width="1.6"/><path d="M529 186V479" stroke="#866c20" stroke-width="1.6"/><path d="M737.4 186V479" stroke="#866c20" stroke-width="1.6"/><path d="M42 185.8H844" stroke="#866c20" stroke-width="1.15"/><path d="M42 251.2H844" stroke="#866c20" stroke-width="1.15"/><path d="M42 279.9H844" stroke="#866c20" stroke-width="1.15"/><path d="M42 308.4H844" stroke="#866c20" stroke-width="1.15"/><path d="M42 337.2H844" stroke="#866c20" stroke-width="1.15"/><path d="M42 365.8H844" stroke="#866c20" stroke-width="1.15"/><path d="M42 394.5H844" stroke="#866c20" stroke-width="1.15"/><path d="M42 423H844" stroke="#866c20" stroke-width="1.15"/><path d="M42 451.7H844" stroke="#866c20" stroke-width="1.15"/></svg>
<div class="t" style="left:365.5px;top:173px;font-family:'DejaVu Sans',sans-serif;font-weight:bold;font-size:10px;letter-spacing:-0.4px;color:#eaea00">©tutorialgateway.org</div>
</div>
</div>
<!-- PANES -->
<div id="panes">
<div class="a" style="left:860px;top:113px;width:138px;height:500px;background:#454545"></div>
<div class="a" style="left:860px;top:113px;width:138px;height:35px;background:#1f1f1f"></div>
<div class="a" style="left:860px;top:148px;width:138px;height:96px;background:#3b3b3b"></div>
<div class="a" style="left:860px;top:244px;width:138px;height:28px;background:#1f1f1f"></div>
<div class="a" style="left:860px;top:448px;width:138px;height:28px;background:#1f1f1f"></div>
<div class="a" style="left:998px;top:113px;width:25px;height:500px;background:#1f1f1f"></div>
<div class="t" style="left:870px;top:127px;font-size:10px;font-weight:bold;letter-spacing:0;color:#fff">VISUALIZATIONS</div>
<svg style="left:983px;top:126.3px" width="5.5" height="9.6" viewBox="0 0 5.5 9.6"><path d="M0.5 0.4L5 4.8L0.5 9.2" fill="none" stroke="#c4c4c4" stroke-width="1.1"/></svg>
<svg style="left:1009px;top:126.3px" width="5.5" height="9.6" viewBox="0 0 5.5 9.6"><path d="M5 0.4L0.5 4.8L5 9.2" fill="none" stroke="#c4c4c4" stroke-width="1.1"/></svg>
<div class="t" style="left:1017.2px;top:160px;font-size:12px;letter-spacing:0;color:#f0f0f0;-webkit-text-stroke:0.35px;transform-origin:0 0;transform:rotate(90deg) scaleX(0.84)">FIELDS</div>
<svg style="left:867.6px;top:153px" width="14" height="14" viewBox="0 0 14 14"><path d="M0.5 0V13.5H14" fill="none" stroke="#9d9d9d" stroke-width="0.9"/><rect x="1" y="2" width="4" height="4" fill="#9d9d9d"/><rect x="5" y="2" width="5.5" height="4" fill="#f0932b"/><rect x="1" y="7.5" width="6" height="4" fill="#9d9d9d"/><rect x="7" y="7.5" width="5.5" height="4" fill="#f0932b"/></svg>
<svg style="left:889px;top:153px" width="14" height="14" viewBox="0 0 14 14"><path d="M0.5 0V13.5H14" fill="none" stroke="#9d9d9d" stroke-width="0.9"/><rect x="3" y="3.5" width="3.6" height="5" fill="#f0932b"/><rect x="3" y="8.5" width="3.6" height="4.5" fill="#9d9d9d"/><rect x="8.6" y="1" width="3.6" height="6.5" fill="#f0932b"/><rect x="8.6" y="7.5" width="3.6" height="5.5" fill="#9d9d9d"/></svg>
<svg style="left:910.5px;top:153px" width="14" height="14" viewBox="0 0 14 14"><path d="M0.5 0V13.5H14" fill="none" stroke="#9d9d9d" stroke-width="0.9"/><rect x="1" y="1.2" width="8" height="2.4" fill="#ecc57e"/><rect x="1" y="3.8" width="12.5" height="2.4" fill="#7fa8d9"/><rect x="1" y="7" width="10.5" height="2.4" fill="#ecc57e"/><rect x="1" y="9.8" width="7.5" height="2.4" fill="#7fa8d9"/></svg>
<svg style="left:932px;top:153px" width="14" height="14" viewBox="0 0 14 14"><path d="M0.5 0V13.5H14" fill="none" stroke="#9d9d9d" stroke-width="0.9"/><rect x="2" y="5" width="2.4" height="8" fill="#ecc57e"/><rect x="4.6" y="0.8" width="2.4" height="12.2" fill="#7fa8d9"/><rect x="8" y="3" width="2.4" height="10" fill="#ecc57e"/><rect x="10.6" y="5.5" width="2.4" height="7.5" fill="#7fa8d9"/></svg>
<svg style="left:953.3px;top:153px" width="14" height="14" viewBox="0 0 14 14"><path d="M0.5 0V13.5H14" fill="none" stroke="#9d9d9d" stroke-width="0.9"/><rect x="1" y="2" width="6" height="4" fill="#9d9d9d"/><rect x="7" y="2" width="6.5" height="4" fill="#7fa8d9"/><rect x="1" y="7.5" width="8" height="4" fill="#9d9d9d"/><rect x="9" y="7.5" width="4.5" height="4" fill="#7fa8d9"/></svg>
<svg style="left:974.5px;top:153px" width="14" height="14" viewBox="0 0 14 14"><path d="M0.5 0V13.5H14" fill="none" stroke="#9d9d9d" stroke-width="0.9"/><rect x="3" y="1" width="3.8" height="6.5" fill="#7fa8d9"/><rect x="3" y="7.5" width="3.8" height="5.5" fill="#9d9d9d"/><rect x="8.8" y="1" width="3.8" height="8" fill="#7fa8d9"/><rect x="8.8" y="9" width="3.8" height="4" fill="#9d9d9d"/></svg>
<svg style="left:867.6px;top:171px" width="14" height="14" viewBox="0 0 14 14"><path d="M0.5 0V13.5H14" fill="none" stroke="#9d9d9d" stroke-width="0.9"/><path d="M1 11L5 7L8 9L13 3.5" fill="none" stroke="#ecc57e" stroke-width="1.2"/><path d="M1 7L4.5 4.5L7.5 7.5L10.5 3L13.5 4.5" fill="none" stroke="#3f7cc4" stroke-width="1.2"/></svg>
<svg style="left:889px;top:171px" width="14" height="14" viewBox="0 0 14 14"><path d="M0.5 0V13.5H14" fill="none" stroke="#9d9d9d" stroke-width="0.9"/><path d="M1 13V6L4 4L7 8L11 3L14 5V13z" fill="#ecc57e"/><path d="M7 8L11 3L14 5V13H7z" fill="#f0932b"/><path d="M1 13V9.5L5 7.5L9 10L14 9V13z" fill="#9d9d9d"/><path d="M1 9.5L5 7.5L8 9.5L1 10.5z" fill="#7fa8d9"/></svg>
<svg style="left:910.5px;top:171px" width="14" height="14" viewBox="0 0 14 14"><path d="M0.5 0V13.5H14" fill="none" stroke="#9d9d9d" stroke-width="0.9"/><path d="M1 13V4L3.5 2L6 4.5L8.5 2L11 4.5L14 2.5V13z" fill="#ecc57e"/><path d="M1 13V7.5L3.5 5.5L6 8L8.5 5.5L11 8L14 6V13z" fill="#3f7cc4"/><path d="M1 13V11L3.5 9.5L6 11.5L8.5 9.5L11 11.5L14 10V13z" fill="#f2a583"/></svg>
<svg style="left:932px;top:171px" width="14" height="14" viewBox="0 0 14 14"><path d="M0.5 0V13.5H14" fill="none" stroke="#9d9d9d" stroke-width="0.9"/><path d="M13.5 0V13.5" stroke="#f0932b" stroke-width="1"/><rect x="3" y="3" width="3" height="5" fill="#f2a583"/><rect x="3" y="8" width="3" height="5" fill="#9d9d9d"/><rect x="8" y="6" width="3" height="3.5" fill="#f2a583"/><rect x="8" y="9.5" width="3" height="3.5" fill="#9d9d9d"/><path d="M1 10L4.5 7.5L9 8.5L12.5 2.5" fill="none" stroke="#d8382c" stroke-width="0.9"/></svg>
<svg style="left:953.3px;top:171px" width="14" height="14" viewBox="0 0 14 14"><path d="M0.5 0V13.5H14" fill="none" stroke="#9d9d9d" stroke-width="0.9"/><path d="M13.5 0V13.5" stroke="#f0932b" stroke-width="1"/><rect x="1.8" y="6.5" width="2.2" height="6.5" fill="#ecc57e"/><rect x="4.2" y="1.5" width="2.2" height="11.5" fill="#7fa8d9"/><rect x="7.6" y="4" width="2.2" height="9" fill="#ecc57e"/><rect x="10" y="7" width="2.2" height="6" fill="#7fa8d9"/><path d="M1 9L5 7L9 9L12.5 5.5" fill="none" stroke="#d8382c" stroke-width="0.9"/></svg>
<svg style="left:974.5px;top:171px" width="14" height="14" viewBox="0 0 14 14"><path d="M0.5 0V13.5H14" fill="none" stroke="#9d9d9d" stroke-width="0.9"/><rect x="2" y="5" width="3" height="8" fill="#f2a583"/><rect x="6.3" y="3.5" width="3" height="9.5" fill="#ecc57e"/><rect x="10.6" y="2" width="3" height="11" fill="#ecc57e"/><path d="M2 8H5L6.3 6H9.3L10.6 5H13.6V8H10.6L9.3 9H6.3L5 11H2z" fill="#f2a583"/><path d="M2 10.5H5L6.3 9.5H9.3L10.6 9H13.6V11H2z" fill="#7fa8d9"/></svg>
<svg style="left:867.6px;top:189.2px" width="14" height="14" viewBox="0 0 14 14"><path d="M0.5 0V13.5H14" fill="none" stroke="#9d9d9d" stroke-width="0.9"/><rect x="2" y="3.5" width="2.6" height="9.5" fill="#9d9d9d"/><rect x="5" y="3.5" width="2.2" height="3.5" fill="#f0932b"/><rect x="7.4" y="7" width="2" height="4" fill="#f0932b"/><rect x="10" y="1" width="2.8" height="12" fill="#e8e8e8"/><path d="M4.6 3.5H7.2V7H9.4" fill="none" stroke="#9d9d9d" stroke-width="0.5"/></svg>
<svg style="left:889px;top:189.2px" width="14" height="14" viewBox="0 0 14 14"><path d="M0.5 0V13.5H14" fill="none" stroke="#9d9d9d" stroke-width="0.9"/><circle cx="4" cy="4" r="1.2" fill="#f0932b"/><circle cx="10" cy="3.2" r="1.1" fill="#5a9e86"/><circle cx="7.5" cy="7.2" r="1.3" fill="#ecc57e"/><circle cx="3.2" cy="9" r="0.9" fill="#3f7cc4"/><circle cx="11.2" cy="9.8" r="0.9" fill="#ecc57e"/><circle cx="13" cy="7" r="1" fill="#3f7cc4"/></svg>
<svg style="left:910.5px;top:189.2px" width="14" height="14" viewBox="0 0 14 14"><circle cx="7" cy="7" r="6.7" fill="#7fa8d9"/><path d="M7 7L3.2 1.5A6.7 6.7 0 0 1 8 0.35z" fill="#fbe3c3"/><path d="M7 7L3.2 1.5A6.7 6.7 0 0 0 0.4 6z" fill="#f6d5a8"/><path d="M7 7L0.4 6A6.7 6.7 0 0 0 3 12.4z" fill="#ecc57e"/><path d="M7 7L3.2 1.5M7 7L0.4 6M7 7L3 12.4" stroke="#444" stroke-width="0.6"/></svg>
<svg style="left:932px;top:189.2px" width="14" height="14" viewBox="0 0 14 14"><circle cx="7" cy="7" r="5.2" fill="none" stroke="#3f7cc4" stroke-width="3.2" stroke-dasharray="6.5 1"/><path d="M9.5 1.4A6.3 6.3 0 0 1 13.2 6" fill="none" stroke="#ecc57e" stroke-width="3.2"/></svg>
<svg style="left:953.3px;top:189.2px" width="14" height="14" viewBox="0 0 14 14"><rect x="0" y="0.5" width="4" height="7" fill="#fff"/><rect x="4.6" y="0.5" width="9" height="3.2" fill="#e0e0e0"/><rect x="4.6" y="4.3" width="9" height="3.2" fill="#cfcfcf"/><rect x="0" y="8.2" width="6.5" height="5.3" fill="#fff"/><rect x="7.1" y="8.2" width="6.5" height="5.3" fill="#fff"/></svg>
<svg style="left:974.5px;top:189.2px" width="14" height="14" viewBox="0 0 14 14"><circle cx="7" cy="7" r="6.3" fill="#fff" stroke="#3f7cc4" stroke-width="0.9"/><path d="M0.7 7H13.3M1.6 3.8H12.4M1.6 10.2H12.4M7 0.7V13.3" stroke="#7fa8d9" stroke-width="0.5" fill="none"/><ellipse cx="7" cy="7" rx="3" ry="6.3" fill="none" stroke="#7fa8d9" stroke-width="0.5"/></svg>
<svg style="left:867.6px;top:207.8px" width="14" height="14" viewBox="0 0 14 14"><path d="M0.5 2L5 1.5L8 3L12 1.5V6L10.5 9L11.5 12L8 11L6 13.5L3.5 11.5L1.5 8z" fill="#7fa8d9"/><path d="M3 4.5L8 4L10 5.5L7.5 8L3.5 7.5z" fill="#9d9d9d"/><path d="M5 9L9 8.5L8 11L6 12z" fill="#d5d5d5"/><path d="M12 2V9" stroke="#ecc57e" stroke-width="1.6"/></svg>
<svg style="left:889px;top:207.8px" width="14" height="14" viewBox="0 0 14 14"><rect x="0.5" y="1" width="13" height="2.5" fill="#7fa8d9"/><rect x="2" y="4.3" width="10" height="2.5" fill="#ecc57e"/><rect x="3.8" y="7.6" width="6.4" height="2.5" fill="#7fa8d9"/><rect x="5" y="10.9" width="4" height="2.3" fill="#7fa8d9"/></svg>
<svg style="left:910.5px;top:207.8px" width="14" height="14" viewBox="0 0 14 14"><path d="M1.7 11.5A5.6 5.6 0 0 1 9.5 4.2" fill="none" stroke="#ecc57e" stroke-width="2.6"/><path d="M9.5 4.2A5.6 5.6 0 0 1 12.6 11.5" fill="none" stroke="#5a9e86" stroke-width="2.6"/><path d="M5.5 11.5L8.5 8.5" stroke="#333" stroke-width="1"/></svg>
<svg style="left:932px;top:207.8px" width="14" height="14" viewBox="0 0 14 14"><rect x="0.5" y="2.5" width="13" height="9.5" fill="#fff" stroke="#bbb" stroke-width="0.8"/><text x="7" y="8.3" text-anchor="middle" font-family="Liberation Sans,sans-serif" font-size="6.5" font-weight="bold" fill="#3f7cc4" letter-spacing="0">123</text><path d="M2.5 10H11.5" stroke="#999" stroke-width="0.8"/></svg>
<svg style="left:953.3px;top:207.8px" width="14" height="14" viewBox="0 0 14 14"><rect x="0.5" y="0.5" width="12.5" height="13" fill="#fff" stroke="#bbb" stroke-width="0.8"/><rect x="2.5" y="2" width="1.6" height="10" fill="#9d9d9d"/><path d="M5.5 3H9M5.5 7.5H9.5" stroke="#3f7cc4" stroke-width="1"/><path d="M5.5 5H8M5.5 9.5H8.5" stroke="#bbb" stroke-width="0.8"/></svg>
<svg style="left:974.5px;top:207.8px" width="14" height="14" viewBox="0 0 14 14"><rect x="0.5" y="2.5" width="13" height="9" fill="#fff" stroke="#bbb" stroke-width="0.8"/><path d="M3.5 7.5L5.5 4.5L7.5 7.5z" fill="#5a9e86"/><path d="M8 5L12 5L10 8z" fill="#f0932b"/><path d="M2.5 9.5H11.5" stroke="#bbb" stroke-width="0.7"/></svg>
<svg style="left:867.6px;top:226.2px" width="14" height="14" viewBox="0 0 14 14"><rect x="0" y="0.5" width="12" height="13" fill="#fff"/><rect x="0" y="0.5" width="12" height="2.2" fill="#3f7cc4"/><rect x="1.8" y="4.3" width="1.8" height="1.8" fill="#7fa8d9"/><rect x="1.8" y="7.3" width="1.8" height="1.8" fill="#ecc57e"/><rect x="1.8" y="10.3" width="1.8" height="1.8" fill="#ecc57e"/><path d="M6.5 7H14L11.3 10.2V14.5L9.3 13V10.2z" fill="#9d9d9d"/></svg>
<svg style="left:889px;top:226.2px" width="14" height="14" viewBox="0 0 14 14"><rect x="0.5" y="0.5" width="12.5" height="13.5" fill="#fff"/><rect x="0.5" y="0.5" width="12.5" height="2.4" fill="#7fa8d9"/><path d="M0.5 6.5H13M0.5 10.2H13M4.6 3V14M8.8 3V14" stroke="#bcbcbc" stroke-width="0.8"/></svg>
<svg style="left:910.5px;top:226.2px" width="14" height="14" viewBox="0 0 14 14"><rect x="-1.5" y="-1.5" width="17" height="17" fill="#333" stroke="#f2c811" stroke-width="1.2"/><rect x="0.5" y="0.5" width="13" height="13" fill="#8c8c8c"/><rect x="0.5" y="0.5" width="13" height="3.6" fill="#6f6f6f"/><rect x="0.5" y="0.5" width="3.8" height="13" fill="#6f6f6f"/><path d="M0.5 4.2H13.5M0.5 8.8H13.5M4.4 0.5V13.5M9 0.5V13.5" stroke="#333" stroke-width="0.9"/></svg>
<svg style="left:932px;top:226.2px" width="14" height="14" viewBox="0 0 14 14"><text x="7" y="14" text-anchor="middle" font-family="Liberation Sans,sans-serif" font-size="17" font-weight="bold" fill="#7fa8d9" letter-spacing="0">R</text></svg>
<svg style="left:953.3px;top:226.2px" width="14" height="14" viewBox="0 0 14 14"><rect x="2.5" y="6" width="1.6" height="1.6" fill="#e8e8f8"/><rect x="6.2" y="6" width="1.6" height="1.6" fill="#e8e8f8"/><rect x="9.9" y="6" width="1.6" height="1.6" fill="#e8e8f8"/></svg>
<svg style="left:875px;top:249px" width="18" height="16" viewBox="0 0 18 16" fill="none" stroke="#fff"><path d="M1.5 1.4H13" stroke-width="1"/><rect x="1.4" y="3.6" width="15.6" height="4.6" stroke-width="1" stroke-dasharray="1.1 0.9"/><rect x="1.4" y="10.4" width="15.6" height="4.6" stroke-width="1" stroke-dasharray="1.1 0.9"/></svg>
<svg style="left:906px;top:249px" width="16" height="17" viewBox="0 0 16 17"><rect x="1" y="1" width="11" height="4" rx="1" fill="none" stroke="#fff" stroke-width="1.2"/><path d="M12 3H14.5V7.5H7.5V10" fill="none" stroke="#fff" stroke-width="1.1"/><rect x="6.2" y="10" width="2.8" height="6" rx="0.8" fill="none" stroke="#fff" stroke-width="1.1"/></svg>
<svg style="left:936px;top:249px" width="18" height="18" viewBox="0 0 18 18"><circle cx="7.5" cy="7.5" r="6.3" fill="none" stroke="#fff" stroke-width="1.2"/><path d="M12 12L17 17" stroke="#fff" stroke-width="1.5"/><path d="M3 9L6 6.5L8.5 8L12 4.5" fill="none" stroke="#fff" stroke-width="0.9"/><path d="M4.5 12.5V9.5M7 13.5V9.5M9.5 13V8.5" stroke="#fff" stroke-width="1"/></svg>
<svg style="left:0;top:0" width="1024" height="617" viewBox="0 0 1024 617"><path d="M870 270.4H897.6" stroke="#f2c811" stroke-width="1.6"/></svg>
<div class="lbl" style="top:278.5px;font-size:9.3px">Rows</div>
<div class="a" style="left:864px;top:293px;width:129px;height:28px;border:1px dashed #5e5e5e;box-sizing:border-box;border-radius:2px"></div>
<div class="well" style="top:296px;height:16px"><span style="top:4px">Color</span></div><svg style="left:969px;top:303px" width="6" height="3" viewBox="0 0 6 3"><path d="M0 0H6L3 3z" fill="#999"/></svg><svg style="left:981px;top:301px" width="7" height="7" viewBox="0 0 7 7"><path d="M0.5 0.5L6.5 6.5M6.5 0.5L0.5 6.5" stroke="#ddd" stroke-width="1.1"/></svg>
<div class="lbl" style="top:331px;font-size:9.3px">Columns</div>
<div class="a" style="left:864px;top:345px;width:129px;height:28px;border:1px dashed #5e5e5e;box-sizing:border-box;border-radius:2px"></div>
<div class="well" style="top:349px;height:16px"><span style="top:4px">Occupation</span></div><svg style="left:969px;top:356px" width="6" height="3" viewBox="0 0 6 3"><path d="M0 0H6L3 3z" fill="#999"/></svg><svg style="left:981px;top:354px" width="7" height="7" viewBox="0 0 7 7"><path d="M0.5 0.5L6.5 6.5M6.5 0.5L0.5 6.5" stroke="#ddd" stroke-width="1.1"/></svg>
<div class="lbl" style="top:383.5px;font-size:9.3px">Values</div>
<div class="a" style="left:864px;top:397px;width:129px;height:47px;border:1px dashed #5e5e5e;box-sizing:border-box;border-radius:2px"></div>
<div class="well" style="top:401px;height:16px"><span style="top:4px">Sales</span></div><svg style="left:969px;top:408px" width="6" height="3" viewBox="0 0 6 3"><path d="M0 0H6L3 3z" fill="#999"/></svg><svg style="left:981px;top:406px" width="7" height="7" viewBox="0 0 7 7"><path d="M0.5 0.5L6.5 6.5M6.5 0.5L0.5 6.5" stroke="#ddd" stroke-width="1.1"/></svg>
<div class="well" style="top:421px;height:16px"><span style="top:4px">Cost</span></div><svg style="left:969px;top:428px" width="6" height="3" viewBox="0 0 6 3"><path d="M0 0H6L3 3z" fill="#999"/></svg><svg style="left:981px;top:426px" width="7" height="7" viewBox="0 0 7 7"><path d="M0.5 0.5L6.5 6.5M6.5 0.5L0.5 6.5" stroke="#ddd" stroke-width="1.1"/></svg>
<div class="t" style="left:871px;top:460px;font-size:10.4px;font-weight:bold;letter-spacing:0;color:#fff">FILTERS</div>
<div class="t" style="left:870px;top:485px;font-size:10px;color:#c8c8c8">Visual level filters</div>
<div class="a" style="left:864px;top:503px;width:129px;height:97px;border:1px dashed #5e5e5e;box-sizing:border-box;border-radius:2px"></div>
<div class="flt" style="top:506px;height:19px"><span>Color (All)</span></div>
<div class="flt" style="top:528px;height:19px"><span>Cost (All)</span></div>
<div class="flt" style="top:550px;height:19px"><span>Occupation (All)</span></div>
<div class="flt" style="top:572px;height:19px"><span>Sales (All)</span></div>
<div class="t" style="left:870px;top:610px;font-size:10px;color:#c8c8c8;height:4px;overflow:hidden">Page level filters</div>
<div class="a" style="left:994px;top:272px;width:4px;height:246px;background:#6f6f6f"></div>
</div>
<!-- PAGETABS -->
<div id="pagetabs">
<div class="a" style="left:33px;top:586px;width:827px;height:27px;background:#ebebeb"></div>
<svg style="left:38px;top:597px" width="16" height="7" viewBox="0 0 16 7"><path d="M3.5 0V7L0 3.5z M12.5 0V7L16 3.5z" fill="#c2c2c2"/></svg>
<div class="a" style="left:59px;top:587px;width:2px;height:26px;background:#d4d4d4"></div>
<div class="ptab" style="left:61px;width:95px;font-size:9px">RIBBON CHART</div>
<div class="ptab" style="left:156px;width:87px;font-size:9px">AREA CHART</div>
<div class="ptab" style="left:243px;width:54px;font-size:9px">CARD</div>
<div class="ptab" style="left:297px;width:110px;font-size:9px">MULTI-ROW CARD</div>
<div class="ptab" style="left:407px;width:57px;font-size:9px">TABLE</div>
<div class="ptab" style="left:464px;width:63px;font-size:9px">TABLE 1</div>
<div class="ptab" style="left:527px;width:64px;font-size:9px">TABLE 2</div>
<div class="ptab" style="left:591px;width:116px;font-size:9.5px">Duplicate of TABLE 1</div>
<div class="ptab" style="left:706px;width:63px;background:#fff;border-right:none;border-bottom:2px solid #f2c811;line-height:26px;font-size:9px">MATRIX</div>
<div class="ptab" style="left:769px;width:29px;background:#f4c636;border-right:none;color:#666b75;font-size:17px;font-weight:bold;line-height:24px;-webkit-text-stroke:0">+</div>
</div>
<div class="a" style="left:1px;top:613px;width:1022px;height:1px;background:#8a8a8a"></div><div class="a" style="left:1px;top:614px;width:1022px;height:3px;background:#2d2d2d"></div>
</body>
</html>
